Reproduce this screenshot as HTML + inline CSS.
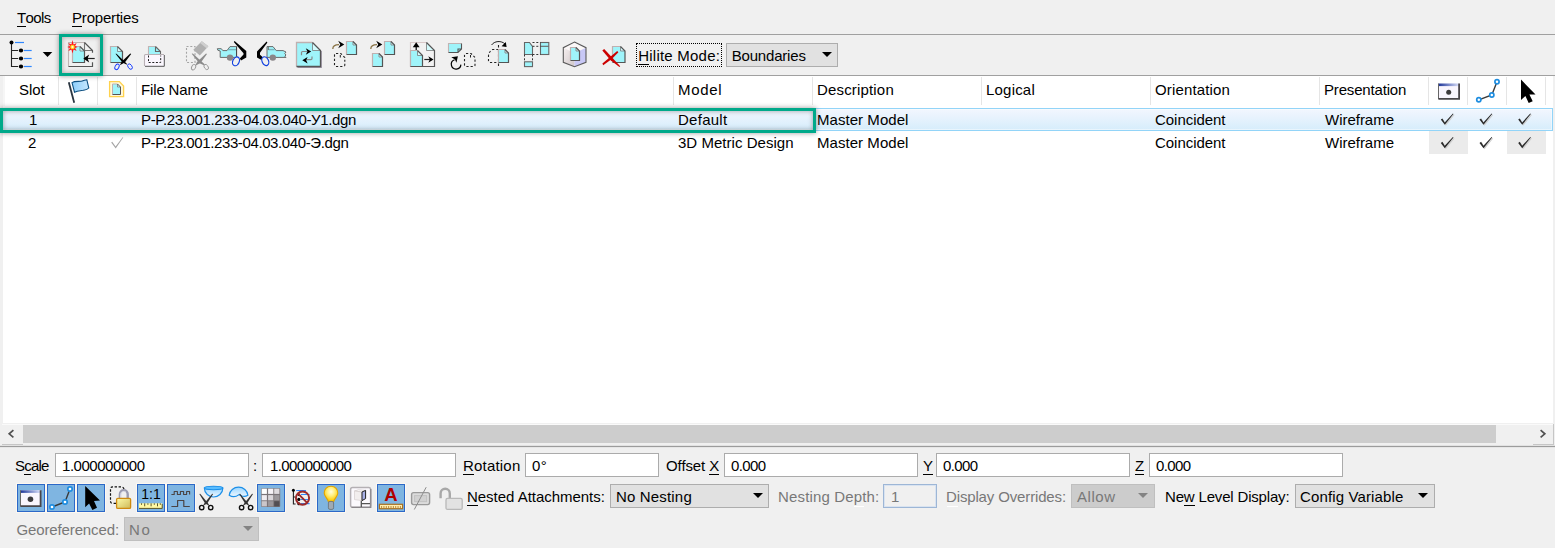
<!DOCTYPE html>
<html><head><meta charset="utf-8">
<style>
html,body{margin:0;padding:0;}
body{width:1555px;height:548px;background:#f0f0f0;position:relative;overflow:hidden;font-family:"Liberation Sans",sans-serif;font-size:15px;color:#000;}
.a{position:absolute;}
.t{position:absolute;white-space:nowrap;line-height:20px;height:20px;transform-origin:0 50%;}
.g{color:#787878;}
u{text-decoration:none;border-bottom:1px solid currentColor;display:inline-block;line-height:16px;}
.inp{position:absolute;box-sizing:border-box;background:#fff;border:1px solid #ababab;height:24px;top:453px;}
.cmb{position:absolute;box-sizing:border-box;background:#e1e1e1;border:1px solid #adadad;height:24px;}
.cmb.d{background:#cccccc;border-color:#bfbfbf;}
.arr{position:absolute;width:0;height:0;border-left:5px solid transparent;border-right:5px solid transparent;border-top:5px solid #000;}
.arr.d{border-top-color:#838383;}
.sep{position:absolute;top:77px;width:1px;height:28px;background:#e5e5e5;}
.tb{position:absolute;box-sizing:border-box;width:28px;height:28px;top:484px;}
.tb.on{background:#7fb5e1;border:1px solid #2c68c8;box-shadow:0 0 0 1px rgba(255,249,240,.85);}
svg{position:absolute;overflow:visible;}
/*FIT*/#m1{margin-left:0.00px;letter-spacing:-0.640px}#m2{margin-left:0.00px;letter-spacing:-0.190px}#h1{margin-left:0.00px;letter-spacing:-0.090px}#h2{margin-left:0.00px;letter-spacing:-0.148px}#h3{margin-left:0.00px;letter-spacing:0.655px}#h4{margin-left:0.00px;letter-spacing:0.170px}#h5{margin-left:0.00px;letter-spacing:0.203px}#h6{margin-left:0.00px;letter-spacing:0.150px}#h7{margin-left:0.00px;letter-spacing:-0.168px}#r1b{margin-left:0.00px;letter-spacing:-0.360px}#r1c{margin-left:0.00px;letter-spacing:0.267px}#r1d{margin-left:0.00px;letter-spacing:0.052px}#r1e{margin-left:0.00px;letter-spacing:-0.040px}#r1f{margin-left:1.00px;letter-spacing:-0.020px}#r2b{margin-left:0.00px;letter-spacing:-0.389px}#r2c{margin-left:0.00px;letter-spacing:0.030px}#r2d{margin-left:0.00px;letter-spacing:0.052px}#r2e{margin-left:0.00px;letter-spacing:-0.040px}#r2f{margin-left:1.00px;letter-spacing:-0.020px}#hm{margin-left:-0.80px;letter-spacing:0.225px}#hmc{margin-left:-0.32px;letter-spacing:-0.183px}#s1{margin-left:0.00px;letter-spacing:-0.810px}#s2{margin-left:-1.00px;letter-spacing:-0.460px}#s4{margin-left:0.00px;letter-spacing:-0.580px}#s5{margin-left:0.00px;letter-spacing:0.195px}#s6{margin-left:0.00px;letter-spacing:0.480px}#s7{margin-left:0.00px;letter-spacing:-0.090px}#s8{margin-left:0.00px;letter-spacing:-0.610px}#s10{margin-left:0.00px;letter-spacing:-0.610px}#s12{margin-left:0.00px;letter-spacing:-0.610px}#n1{margin-left:0.00px;letter-spacing:-0.030px}#n2{margin-left:0.00px;letter-spacing:0.169px}#n3{margin-left:-1.00px;letter-spacing:0.158px}#n5{margin-left:0.00px;letter-spacing:-0.144px}#n6{margin-left:0.00px;letter-spacing:0.555px}#n7{margin-left:-1.00px;letter-spacing:-0.174px}#n8{margin-left:-1.00px;letter-spacing:0.127px}#g1{margin-left:-0.60px;letter-spacing:-0.119px}#g2{margin-left:-1.00px;letter-spacing:1.710px}#r1a{margin-left:1.00px;letter-spacing:0.000px}#r2a{margin-left:0.00px;letter-spacing:0.000px}/*ENDFIT*/</style></head><body>

<!-- menu -->
<div class="t" id="m1" style="left:17px;top:8px;"><u>T</u>ools</div>
<div class="t" id="m2" style="left:72px;top:8px;"><u>P</u>roperties</div>

<!-- toolbar lines -->
<div class="a" style="left:0;top:34px;width:1555px;height:1px;background:#a0a0a0;"></div>
<div class="a" style="left:0;top:75px;width:1555px;height:1px;background:#a0a0a0;"></div>

<!-- table -->
<div class="a" id="table" style="left:3px;top:76px;width:1550px;height:347px;background:#fff;"></div>
<div class="a" style="left:3px;top:76px;width:2px;height:30px;background:#f6f6f6;"></div>

<!-- header separators -->
<div class="sep" style="left:58px"></div>
<div class="sep" style="left:97px"></div>
<div class="sep" style="left:136px"></div>
<div class="sep" style="left:673px"></div>
<div class="sep" style="left:812px"></div>
<div class="sep" style="left:981px"></div>
<div class="sep" style="left:1150px"></div>
<div class="sep" style="left:1319px"></div>
<div class="sep" style="left:1428px"></div>
<div class="sep" style="left:1467px"></div>
<div class="sep" style="left:1506px"></div>
<div class="sep" style="left:1545px"></div>

<!-- header text -->
<div class="t" id="h1" style="left:19px;top:80px;">Slot</div>
<div class="t" id="h2" style="left:141px;top:80px;">File Name</div>
<div class="t" id="h3" style="left:678px;top:80px;">Model</div>
<div class="t" id="h4" style="left:817px;top:80px;">Description</div>
<div class="t" id="h5" style="left:986px;top:80px;">Logical</div>
<div class="t" id="h6" style="left:1155px;top:80px;">Orientation</div>
<div class="t" id="h7" style="left:1324px;top:80px;">Presentation</div>

<!-- row 1 selected -->
<div class="a" style="left:0;top:108px;width:1553px;height:23px;box-sizing:border-box;border:1px solid #92d4f8;background:linear-gradient(#f2f6fe,#e6f2fd 45%,#d6edfb);box-shadow:inset 0 0 0 1px rgba(255,255,255,.45);"></div>
<!-- row 2 gray cells -->
<div class="a" style="left:1429px;top:131px;width:39px;height:23px;background:#ebebeb;"></div>
<div class="a" style="left:1507px;top:131px;width:39px;height:23px;background:#ebebeb;"></div>

<div class="t" id="r1a" style="left:28px;top:110px;">1</div>
<div class="t" id="r1b" style="left:141px;top:110px;">P-P.23.001.233-04.03.040-У1.dgn</div>
<div class="t" id="r1c" style="left:678px;top:110px;">Default</div>
<div class="t" id="r1d" style="left:817px;top:110px;">Master Model</div>
<div class="t" id="r1e" style="left:1155px;top:110px;">Coincident</div>
<div class="t" id="r1f" style="left:1324px;top:110px;">Wireframe</div>

<div class="t" id="r2a" style="left:28px;top:133px;">2</div>
<div class="t" id="r2b" style="left:141px;top:133px;">P-P.23.001.233-04.03.040-Э.dgn</div>
<div class="t" id="r2c" style="left:678px;top:133px;">3D Metric Design</div>
<div class="t" id="r2d" style="left:817px;top:133px;">Master Model</div>
<div class="t" id="r2e" style="left:1155px;top:133px;">Coincident</div>
<div class="t" id="r2f" style="left:1324px;top:133px;">Wireframe</div>

<!-- green highlight boxes -->
<div class="a" style="left:59px;top:34px;width:44px;height:42px;box-sizing:border-box;border:3px solid #00a98a;box-shadow:0 0 5px rgba(0,0,0,.4), inset 0 0 5px rgba(60,20,20,.35);"></div>
<div class="a" style="left:0px;top:108px;width:816px;height:25px;box-sizing:border-box;border:3px solid #00a98a;box-shadow:0 0 5px rgba(0,0,0,.4), inset 0 0 5px rgba(0,0,0,.35);"></div>

<!-- Hilite mode -->
<div class="a" style="left:636px;top:43px;width:86px;height:24px;box-sizing:border-box;border:1px dotted #000;"></div>
<div class="t" id="hm" style="left:639px;top:46px;"><u>H</u>ilite Mode:</div>
<div class="cmb" style="left:726px;top:43px;width:112px;"></div>
<div class="t" id="hmc" style="left:732px;top:46px;">Boundaries</div>
<div class="arr" style="left:822px;top:52px;"></div>

<!-- scrollbar -->
<div class="a" style="left:0;top:423px;width:1555px;height:23px;background:#f0f0f0;"></div>
<div class="a" style="left:2px;top:424px;width:1551px;height:1px;background:#fafafa;"></div>
<div class="a" style="left:23px;top:425px;width:1473px;height:18px;background:#cdcdcd;"></div>
<div class="a" style="left:2px;top:444px;width:21px;height:1px;background:#c6c6c6;"></div>
<div class="a" style="left:1533px;top:444px;width:21px;height:1px;background:#c6c6c6;"></div>
<div class="a" style="left:1553px;top:424px;width:1px;height:21px;background:#c6c6c6;"></div>
<div class="a" style="left:0;top:445px;width:1555px;height:1px;background:#e2e2e2;"></div>
<div class="a" style="left:0;top:446px;width:1555px;height:1px;background:#9c9c9c;"></div>
<div class="a" style="left:0;top:447px;width:1555px;height:1px;background:#e6e6e6;"></div>

<!-- Scale row -->
<div class="t" id="s1" style="left:15px;top:456px;">S<u>c</u>ale</div>
<div class="inp" style="left:55px;width:194px;"></div>
<div class="t" id="s2" style="left:63px;top:456px;">1.000000000</div>
<div class="t" id="s3" style="left:253px;top:456px;">:</div>
<div class="inp" style="left:262px;width:194px;"></div>
<div class="t" id="s4" style="left:270px;top:456px;">1.000000000</div>
<div class="t" id="s5" style="left:463px;top:456px;"><u>R</u>otation</div>
<div class="inp" style="left:525px;width:134px;"></div>
<div class="t" id="s6" style="left:532px;top:456px;">0°</div>
<div class="t" id="s7" style="left:666px;top:456px;">Offset <u>X</u></div>
<div class="inp" style="left:724px;width:194px;"></div>
<div class="t" id="s8" style="left:731px;top:456px;">0.000</div>
<div class="t" id="s9" style="left:923px;top:456px;"><u>Y</u></div>
<div class="inp" style="left:936px;width:194px;"></div>
<div class="t" id="s10" style="left:943px;top:456px;">0.000</div>
<div class="t" id="s11" style="left:1135px;top:456px;"><u>Z</u></div>
<div class="inp" style="left:1149px;width:194px;"></div>
<div class="t" id="s12" style="left:1156px;top:456px;">0.000</div>

<!-- icon row -->
<div class="tb on" style="left:17px"></div>
<div class="tb on" style="left:47px"></div>
<div class="tb on" style="left:77px"></div>
<div class="tb" style="left:107px"></div>
<div class="tb on" style="left:137px"></div>
<div class="tb on" style="left:167px"></div>
<div class="tb" style="left:197px"></div>
<div class="tb" style="left:227px"></div>
<div class="tb on" style="left:257px"></div>
<div class="tb" style="left:287px"></div>
<div class="tb on" style="left:317px"></div>
<div class="tb" style="left:347px"></div>
<div class="tb on" style="left:377px"></div>
<div class="tb" style="left:407px"></div>
<div class="tb" style="left:437px"></div>

<div class="t" id="n1" style="left:467px;top:487px;"><u>N</u>ested Attachments:</div>
<div class="cmb" style="left:610px;top:484px;width:159px;"></div>
<div class="t" id="n2" style="left:616px;top:487px;">No Nesting</div>
<div class="arr" style="left:753px;top:493px;"></div>
<div class="t g" id="n3" style="left:779px;top:487px;">Nesting Depth:</div>
<div class="a" style="left:883px;top:484px;width:54px;height:24px;box-sizing:border-box;border:1px solid #9db6d6;box-shadow:inset 0 0 0 1px #d9e3f0;background:#f0f0f0;"></div>
<div class="t g" id="n4" style="left:891px;top:487px;">1</div>
<div class="t g" id="n5" style="left:946px;top:487px;">Display Overrides:</div>
<div class="cmb d" style="left:1071px;top:484px;width:84px;"></div>
<div class="t g" id="n6" style="left:1077px;top:487px;">Allow</div>
<div class="arr d" style="left:1138px;top:493px;"></div>
<div class="t" id="n7" style="left:1166px;top:487px;">Ne<u>w</u> Level Display:</div>
<div class="cmb" style="left:1295px;top:484px;width:140px;"></div>
<div class="t" id="n8" style="left:1301px;top:487px;">Config Variable</div>
<div class="arr" style="left:1418px;top:493px;"></div>

<div class="a" style="left:854px;top:506px;width:10px;height:1px;background:#fff;"></div>
<div class="a" style="left:947px;top:506px;width:11px;height:1px;background:#fff;"></div>
<div class="a" style="left:18px;top:539px;width:11px;height:1px;background:#fff;"></div>
<!-- georef -->
<div class="t g" id="g1" style="left:17px;top:520px;">Georeferenced:</div>
<div class="cmb d" style="left:124px;top:517px;width:135px;"></div>
<div class="t g" id="g2" style="left:130px;top:520px;">No</div>
<div class="arr d" style="left:243px;top:526px;"></div>

<!--SVG--><svg width="1555" height="548" viewBox="0 0 1555 548" style="left:0;top:0;pointer-events:none">
<g>
<path d="M11.5,42.5V66.5H18M11.5,50.5H18M11.5,58.5H18" fill="none" stroke="#222" stroke-width="1.1"/>
<circle cx="11.5" cy="42.5" r="2" fill="#000"/>
<ellipse cx="21" cy="50.5" rx="2.2" ry="1.9" fill="#000"/>
<path d="M24,50.5H31.7" stroke="#3088ff" stroke-width="1.2"/>
<ellipse cx="21" cy="58.5" rx="2.2" ry="1.9" fill="#000"/>
<path d="M24,58.5H31.7" stroke="#3088ff" stroke-width="1.2"/>
<ellipse cx="21" cy="66.5" rx="2.2" ry="1.9" fill="#000"/>
<path d="M24,66.5H31.7" stroke="#3088ff" stroke-width="1.2"/>
<path d="M15,42.5H24" stroke="#3088ff" stroke-width="1.2"/>
<path d="M42.7,52H52.3L47.5,57Z" fill="#000"/>
</g>
<path d="M68.5,66.5V42.5H84.5" fill="none" stroke="#c0b4b4" stroke-width="1.1"/>
<path d="M84.5,42.5V50.5H92.5" fill="none" stroke="#777" stroke-width="1.1"/>
<path d="M84.5,42.5L92.5,50.5V52.8M92.5,62.3V66.5H68.5" fill="none" stroke="#555" stroke-width="1.2"/>
<path d="M72.5,46.5H80.0L84.5,51.0V62.5H72.5Z" fill="#9ff4fa" stroke="none"/>
<path d="M72.5,62.5V46.5H80.0" fill="none" stroke="#bfb0b0" stroke-width="1.2"/>
<path d="M80.0,46.5V51.0H84.5Z" fill="#d4fbfd" stroke="none"/>
<path d="M80.0,46.5V51.0H84.5" fill="none" stroke="#7a7a7a" stroke-width="0.8"/>
<path d="M80.0,46.5L84.5,51.0V62.5H72.5" fill="none" stroke="#555" stroke-width="1.2"/>
<path d="M94.7,58.5H86.5" stroke="#222" stroke-width="1.2"/>
<path d="M83.3,58.5L89.2,54.6L87.6,58.5L89.2,62.4Z" fill="#000"/>
<path d="M72.5,40L73.6,44.4L76.6,42.9L75.1,45.9L77.6,47L75.1,48.1L76.6,51.1L73.6,49.6L72.5,53.6L71.4,49.6L68.4,51.1L69.9,48.1L67.2,47L69.9,45.9L68.4,42.9L71.4,44.4Z" fill="#ff1418"/>
<circle cx="72.5" cy="47" r="2.3" fill="#ffd820"/><circle cx="72.5" cy="47" r="1.1" fill="#fffbe0"/>
<path d="M110.5,46.5H117.5L122.5,51.5V62.5H110.5Z" fill="#9ff4fa" stroke="none"/>
<path d="M110.5,62.5V46.5H117.5" fill="none" stroke="#bfb0b0" stroke-width="1.2"/>
<path d="M117.5,46.5V51.5H122.5Z" fill="#d4fbfd" stroke="none"/>
<path d="M117.5,46.5V51.5H122.5" fill="none" stroke="#7a7a7a" stroke-width="0.8"/>
<path d="M117.5,46.5L122.5,51.5V62.5H110.5" fill="none" stroke="#555" stroke-width="1.2"/>
<path d="M115.5,53.8L116.5,53.7L126.6,63.4L127,64.8L122.4,62.6Z" fill="#000"/>
<path d="M131.2,54L130.3,53.6L121.8,61.4L119.8,65.3L124.8,62.4Z" fill="#000"/>
<ellipse cx="117" cy="66.8" rx="1.9" ry="3" transform="rotate(28 117 66.8)" fill="none" stroke="#1238ff" stroke-width="0.9"/>
<ellipse cx="130" cy="66.6" rx="1.9" ry="3" transform="rotate(-35 130 66.6)" fill="none" stroke="#1238ff" stroke-width="0.9"/>
<path d="M148.5,55V46.5H155.5L160.5,51.5V55Z" fill="#9ff4fa"/>
<path d="M148.5,55V46.5H155.5" fill="none" stroke="#c0b4b4" stroke-width="1.1"/>
<path d="M155.5,46.5V51.5H160.5M155.5,46.5L160.5,51.5V55" fill="none" stroke="#666" stroke-width="1.1"/>
<rect x="144.5" y="54.5" width="20" height="12" rx="1" fill="#fbf7fe"/>
<path d="M144.5,66V55.5Q144.5,54.5 145.5,54.5H164" fill="none" stroke="#b8b0b4" stroke-width="1.1"/>
<path d="M164.3,55V66.3H145" fill="none" stroke="#555" stroke-width="1"/>
<path d="M148.5,55.5V62.5H160.7V55.5" fill="none" stroke="#222" stroke-width="1" stroke-dasharray="2 1.6"/>
<rect x="186.5" y="46.5" width="8.5" height="16" fill="none" stroke="#a4a4a4" stroke-width="1.1" stroke-dasharray="2 1.8"/>
<path d="M193.3,49.8L201.8,41.3L208.4,46.2L199.8,55.4Z" fill="#b0b0b0"/>
<path d="M201.8,41.3L208.4,46.2L206.5,48.2L200,43.1Z" fill="#cfcfcf"/>
<path d="M191.7,53.8L192.8,53.6L204.6,64.2L204.5,65.4L199,63Z" fill="#8c8c8c"/>
<path d="M207,54L206,53.6L197,62L195.2,65.8L200.5,63Z" fill="#8c8c8c"/>
<ellipse cx="193.6" cy="67.2" rx="1.9" ry="2.9" transform="rotate(28 193.6 67.2)" fill="none" stroke="#9a9a9a" stroke-width="0.9"/>
<ellipse cx="206.2" cy="67" rx="1.9" ry="2.9" transform="rotate(-35 206.2 67)" fill="none" stroke="#9a9a9a" stroke-width="0.9"/>
<path d="M217.3,48.7H221.3L222.8,50.6H227L230,46.6H236.5V57.4H220.2V51L217.8,50.2Z" fill="#9ff4fa" stroke="#6a6a6a" stroke-width="1"/>
<path d="M228,49.6H236" stroke="#7ab4bc" stroke-width="1.4"/>
<circle cx="230" cy="57.6" r="3.2" fill="#8a8688"/>
<path d="M236.6,46.5V57.5" stroke="#444" stroke-width="1"/>
<path d="M233.8,42L234.6,40.9L246.3,51V57.6L241,60.6L239.8,58.4L243.5,54.6V53.2Z" fill="#000"/>
<ellipse cx="236" cy="61.3" rx="3.2" ry="4.6" transform="rotate(25 236 61.3)" fill="#f0f0f0" stroke="#1040e0" stroke-width="1.2"/>
<path d="M267,46.6H273L276.2,50.6H283L286,52L284.8,53.6L286,55L284.8,56.2L286,57.4H267Z" fill="#9ff4fa" stroke="#6a6a6a" stroke-width="1"/>
<path d="M268.6,49.6H274.5" stroke="#7ab4bc" stroke-width="1.4"/>
<path d="M268.3,46.6V50" stroke="#6a6a6a" stroke-width="1"/>
<circle cx="272.8" cy="57.6" r="3.2" fill="#8a8688"/>
<path d="M266.6,41.4L267.4,42.4L260,52.8V54.8L263.6,58L262,60.2L257,57.6V51.4Z" fill="#000"/>
<ellipse cx="265.3" cy="61.2" rx="3.2" ry="4.6" transform="rotate(-25 265.3 61.2)" fill="#f0f0f0" stroke="#1040e0" stroke-width="1.2"/>
<path d="M297.5,67.3H321.3V51" fill="none" stroke="#a098a8" stroke-width="1.2"/>
<path d="M296.5,42.5H312.5L320.5,50.5V66.5H296.5Z" fill="#9ff4fa" stroke="none"/>
<path d="M296.5,66.5V42.5H312.5" fill="none" stroke="#bfb0b0" stroke-width="1.3"/>
<path d="M312.5,42.5V50.5H320.5Z" fill="#d4fbfd" stroke="none"/>
<path d="M312.5,42.5V50.5H320.5" fill="none" stroke="#7a7a7a" stroke-width="0.8"/>
<path d="M312.5,42.5L320.5,50.5V66.5H296.5" fill="none" stroke="#555" stroke-width="1.3"/>
<path d="M301.5,55.2V52.5Q301.5,51.5 302.5,51.5H307" fill="none" stroke="#8a8a8a" stroke-width="1.2"/>
<path d="M311.2,51.5L305.8,48.3L307.4,51.5L305.8,54.7Z" fill="#000"/>
<path d="M312,56.5V58.6Q312,59.6 311,59.6H306.5" fill="none" stroke="#8a8a8a" stroke-width="1.2"/>
<path d="M302.3,60.2L307.6,57L306.2,60.2L307.6,63.4Z" fill="#000"/>
<path d="M332.8,49Q332.8,44.6 339,44.6" fill="none" stroke="#8a7448" stroke-width="1.3"/>
<path d="M344.3,44.5L338.2,40.8L340.2,44.5L338.2,48.2Z" fill="#000"/>
<path d="M370.8,49Q370.8,44.6 377,44.6" fill="none" stroke="#8a7448" stroke-width="1.3"/>
<path d="M382.3,44.5L376.2,40.8L378.2,44.5L376.2,48.2Z" fill="#000"/>
<path d="M346.5,41.5H353.0L356.5,45.0V54.5H346.5Z" fill="#9ff4fa" stroke="none"/>
<path d="M346.5,54.5V41.5H353.0" fill="none" stroke="#bfb0b0" stroke-width="1.2"/>
<path d="M353.0,41.5V45.0H356.5Z" fill="#d4fbfd" stroke="none"/>
<path d="M353.0,41.5V45.0H356.5" fill="none" stroke="#7a7a7a" stroke-width="0.8"/>
<path d="M353.0,41.5L356.5,45.0V54.5H346.5" fill="none" stroke="#555" stroke-width="1.2"/>
<path d="M336.0,53.5H340.8L344.8,57.5V65.0Q344.8,66.5 343.3,66.5H336.0Q334.5,66.5 334.5,65.0V55.0Q334.5,53.5 336.0,53.5Z" fill="none" stroke="#222" stroke-width="1.1" stroke-dasharray="2.2 2"/>
<path d="M340.3,55.0V57.5" fill="none" stroke="#222" stroke-width="1"/>
<path d="M384.5,41.5H391.0L394.5,45.0V54.5H384.5Z" fill="#9ff4fa" stroke="none"/>
<path d="M384.5,54.5V41.5H391.0" fill="none" stroke="#bfb0b0" stroke-width="1.2"/>
<path d="M391.0,41.5V45.0H394.5Z" fill="#d4fbfd" stroke="none"/>
<path d="M391.0,41.5V45.0H394.5" fill="none" stroke="#7a7a7a" stroke-width="0.8"/>
<path d="M391.0,41.5L394.5,45.0V54.5H384.5" fill="none" stroke="#555" stroke-width="1.2"/>
<path d="M372.5,53.5H379.0L382.5,57.0V66.5H372.5Z" fill="#9ff4fa" stroke="none"/>
<path d="M372.5,66.5V53.5H379.0" fill="none" stroke="#bfb0b0" stroke-width="1.2"/>
<path d="M379.0,53.5V57.0H382.5Z" fill="#d4fbfd" stroke="none"/>
<path d="M379.0,53.5V57.0H382.5" fill="none" stroke="#7a7a7a" stroke-width="0.8"/>
<path d="M379.0,53.5L382.5,57.0V66.5H372.5" fill="none" stroke="#555" stroke-width="1.2"/>
<path d="M410.5,42.5H426.5L434.5,50.5V66.5H410.5Z" fill="#f2f2f2" stroke="none"/>
<path d="M410.5,66.5V42.5H426.5" fill="none" stroke="#d8c8c8" stroke-width="1.2"/>
<path d="M426.5,42.5V50.5H434.5Z" fill="#d4fbfd" stroke="none"/>
<path d="M426.5,42.5V50.5H434.5" fill="none" stroke="#7a7a7a" stroke-width="0.8"/>
<path d="M426.5,42.5L434.5,50.5V66.5H410.5" fill="none" stroke="#555" stroke-width="1.2"/>
<path d="M410.5,50.5H417.5L422.5,55.5V66.5H410.5Z" fill="#9ff4fa" stroke="none"/>
<path d="M410.5,66.5V50.5H417.5" fill="none" stroke="#bfb0b0" stroke-width="1.2"/>
<path d="M417.5,50.5V55.5H422.5Z" fill="#d4fbfd" stroke="none"/>
<path d="M417.5,50.5V55.5H422.5" fill="none" stroke="#7a7a7a" stroke-width="0.8"/>
<path d="M417.5,50.5L422.5,55.5V66.5H410.5" fill="none" stroke="#555" stroke-width="1.2"/>
<path d="M416.2,42.3L412.8,47.2H419.6Z" fill="#000"/><path d="M416.2,47V50" stroke="#000" stroke-width="1.2"/>
<path d="M424.3,59.5H430" stroke="#222" stroke-width="1.2"/><path d="M433.5,59.5L428.3,56.3L429.8,59.5L428.3,62.7Z" fill="#000"/>
<path d="M448.5,43.5H461.5V49L458,52.5H448.5Z" fill="#9ff4fa"/>
<path d="M448.5,52.5V43.5H461.5" fill="none" stroke="#c0b4b4" stroke-width="1.1"/>
<path d="M461.5,43.5V49L458,52.5H448.5M458,52.5V49H461.5" fill="none" stroke="#555" stroke-width="1.1"/>
<path d="M460.9,64.6A4.8,4.8 0 1 1 454.6,59.7" fill="none" stroke="#000" stroke-width="1.2"/>
<path d="M451.3,57.3L457.9,56.2L456.4,62.8L455,59.4Z" fill="#000"/>
<path d="M466.0,53.5H471L475,57.5V65.0Q475,66.5 473.5,66.5H466.0Q464.5,66.5 464.5,65.0V55.0Q464.5,53.5 466.0,53.5Z" fill="none" stroke="#222" stroke-width="1.1" stroke-dasharray="2.2 2"/>
<path d="M470.5,55.0V57.5" fill="none" stroke="#222" stroke-width="1"/>
<path d="M491.6,45A8,6.4 0 0 1 505,44" fill="none" stroke="#222" stroke-width="1"/>
<path d="M506.6,47L501.6,46.2L505.8,42Z" fill="#000"/>
<path d="M498.5,45V67.5" stroke="#222" stroke-width="1.1" stroke-dasharray="2.6 2"/>
<path d="M498.5,49.5H492.5Q488.5,52 488.5,56V61Q488.5,62.5 490,62.5H498.5" fill="none" stroke="#222" stroke-width="1.1" stroke-dasharray="2.2 2"/>
<path d="M498.5,49.5H505.0L508.5,53.0V62.5H498.5Z" fill="#9ff4fa" stroke="none"/>
<path d="M498.5,62.5V49.5H505.0" fill="none" stroke="#bfb0b0" stroke-width="1.2"/>
<path d="M505.0,49.5V53.0H508.5Z" fill="#d4fbfd" stroke="none"/>
<path d="M505.0,49.5V53.0H508.5" fill="none" stroke="#7a7a7a" stroke-width="0.8"/>
<path d="M505.0,49.5L508.5,53.0V62.5H498.5" fill="none" stroke="#555" stroke-width="1.2"/>
<path d="M524.5,42.5H529.5L532.5,46.5V54.5H524.5Z" fill="#9ff4fa" stroke="#666" stroke-width="1.1"/>
<rect x="540.5" y="42.5" width="8.3" height="12" fill="#9ff4fa" stroke="#666" stroke-width="1.1"/>
<path d="M540.5,46.3H548.8" stroke="#666" stroke-width="1.1"/>
<rect x="524.5" y="61.8" width="8" height="4.8" fill="#9ff4fa" stroke="#666" stroke-width="1.1"/>
<path d="M532.5,42.5H540.5M532.5,46.3H540.5M532.5,54.5H540.5M524.5,54.5V61.8M532.5,54.5V61.8" fill="none" stroke="#333" stroke-width="1" stroke-dasharray="2 1.8"/>
<defs><linearGradient id="cl" x1="0" y1="0" x2="1" y2="1"><stop offset="0" stop-color="#f6f0f0"/><stop offset="1" stop-color="#cfc6c8"/></linearGradient></defs>
<path d="M574.5,42L586,47.7L574.5,53.3L563.3,47.7Z" fill="#fbf8f8"/>
<path d="M563.3,47.7L574.5,53.3V66.7L563.3,62.3Z" fill="url(#cl)"/>
<path d="M574.5,53.3L586,47.7V62.3L574.5,66.7Z" fill="#c8c8f6"/>
<path d="M574.5,42L586,47.7V62.3L574.5,66.7L563.3,62.3V47.7Z" fill="none" stroke="#5a5a5a" stroke-width="1.1"/>
<path d="M570.5,47.5H576.0L579.5,51.0V60.5H570.5Z" fill="#9ff4fa" stroke="none"/>
<path d="M570.5,60.5V47.5H576.0" fill="none" stroke="#bfb0b0" stroke-width="1.2"/>
<path d="M576.0,47.5V51.0H579.5Z" fill="#d4fbfd" stroke="none"/>
<path d="M576.0,47.5V51.0H579.5" fill="none" stroke="#7a7a7a" stroke-width="0.8"/>
<path d="M576.0,47.5L579.5,51.0V60.5H570.5" fill="none" stroke="#555" stroke-width="1.2"/>
<path d="M612.5,46.5H620.5L625,51.0V62.5H612.5Z" fill="#9ff4fa" stroke="none"/>
<path d="M612.5,62.5V46.5H620.5" fill="none" stroke="#bfb0b0" stroke-width="1.2"/>
<path d="M620.5,46.5V51.0H625Z" fill="#d4fbfd" stroke="none"/>
<path d="M620.5,46.5V51.0H625" fill="none" stroke="#7a7a7a" stroke-width="0.8"/>
<path d="M620.5,46.5L625,51.0V62.5H612.5" fill="none" stroke="#555" stroke-width="1.2"/>
<path d="M602.3,50.6L604.2,49L620.2,66.2L619.4,67L610.6,60.2Z" fill="#cc0000"/>
<path d="M617.2,51L618.4,52.2L611.8,59L603.2,65.2L602.4,63.6Z" fill="#cc0000"/>
<defs><linearGradient id="fg" x1="0" y1="0" x2="1" y2="0"><stop offset="0" stop-color="#8ccefb"/><stop offset="1" stop-color="#c6e7fd"/></linearGradient></defs>
<path d="M68.8,82.3L74.2,102.8" stroke="#2a3540" stroke-width="1.8"/>
<path d="M72,82.6C75,80.6 80,82 83,80.8C85,80.1 86,79.5 86.8,79.7L88.8,88C87,90 85,90 83,90.3C80,90.6 77,90.6 74.5,92.2Z" fill="url(#fg)" stroke="#0d4f80" stroke-width="1.1"/>
<path d="M109.6,81.6H119.4L123.6,86V96.6H109.6Z" fill="#fff8dc" stroke="#ffd24d" stroke-width="1.3"/>
<path d="M112.5,84H117.5L120.5,87V94.5H112.5Z" fill="#9ff4fa" stroke="none"/>
<path d="M112.5,94.5V84H117.5" fill="none" stroke="#bfb0b0" stroke-width="1"/>
<path d="M117.5,84V87H120.5Z" fill="#d4fbfd" stroke="none"/>
<path d="M117.5,84V87H120.5" fill="none" stroke="#7a7a7a" stroke-width="0.8"/>
<path d="M117.5,84L120.5,87V94.5H112.5" fill="none" stroke="#555" stroke-width="1"/>
<defs><linearGradient id="d1" x1="0" y1="0" x2="1" y2="0"><stop offset="0" stop-color="#1c3498"/><stop offset="1" stop-color="#dde2fb"/></linearGradient></defs>
<rect x="1438.5" y="83.5" width="21.0" height="15.700000000000003" fill="#f9f5fd"/>
<rect x="1438.5" y="83.5" width="21.0" height="2.6" fill="url(#d1)"/>
<path d="M1438.5,99.2V83.5" fill="none" stroke="#666" stroke-width="1"/>
<path d="M1459.1,83.5V98.8H1438.5" fill="none" stroke="#4a464a" stroke-width="1.8"/>
<circle cx="1448.7" cy="92.14999999999999" r="2.5" fill="#3c3a3c"/>
<defs><linearGradient id="d2" x1="0" y1="0" x2="1" y2="0"><stop offset="0" stop-color="#1c3498"/><stop offset="1" stop-color="#dde2fb"/></linearGradient></defs>
<rect x="20.5" y="490.3" width="20.5" height="16.30000000000001" fill="#f9f5fd"/>
<rect x="20.5" y="490.3" width="20.5" height="2.6" fill="url(#d2)"/>
<path d="M20.5,506.6V490.3" fill="none" stroke="#666" stroke-width="1"/>
<path d="M40.6,490.3V506.20000000000005H20.5" fill="none" stroke="#4a464a" stroke-width="1.8"/>
<circle cx="30.45" cy="499.25000000000006" r="2.8" fill="#3c3a3c"/>
<path d="M1478.8,99.8L1491.8,95L1497,81.8" fill="none" stroke="#3a3a3a" stroke-width="1.4"/>
<circle cx="1478.8" cy="99.8" r="2.1" fill="#fff" stroke="#1e8de0" stroke-width="1.7"/>
<circle cx="1491.8" cy="95" r="2.1" fill="#fff" stroke="#1e8de0" stroke-width="1.7"/>
<circle cx="1497" cy="81.8" r="2.1" fill="#fff" stroke="#1e8de0" stroke-width="1.7"/>
<path d="M52,507L65,502L70,489" fill="none" stroke="#3a3a3a" stroke-width="1.4"/>
<circle cx="52" cy="507" r="2.2" fill="#fff" stroke="#1e8de0" stroke-width="1.7"/>
<circle cx="65" cy="502" r="2.2" fill="#fff" stroke="#1e8de0" stroke-width="1.7"/>
<circle cx="70" cy="489" r="2.2" fill="#fff" stroke="#1e8de0" stroke-width="1.7"/>
<path d="M1521,79.6V99.9L1525.4,96L1528.7,103L1532.7,101.3L1529.4,94.6L1535.5,94.4Z" fill="#000"/>
<path d="M85.2,486V507.2L89.1,503.4L92.4,510L97,507.8L94,501L100,500.6Z" fill="#000"/>
<path d="M-6.2,-0.2L-4.6,-1.4L-2.3,2.6L5.9,-6.2L6.5,-5.7L-2.2,5Z" transform="translate(1448,120.8)" fill="#cfcfcf"/>
<path d="M-6.2,-0.2L-4.6,-1.4L-2.3,2.6L5.9,-6.2L6.5,-5.7L-2.2,5Z" transform="translate(1447,119.8)" fill="#2a2a2a"/>
<path d="M-6.2,-0.2L-4.6,-1.4L-2.3,2.6L5.9,-6.2L6.5,-5.7L-2.2,5Z" transform="translate(1448,144.2)" fill="#cfcfcf"/>
<path d="M-6.2,-0.2L-4.6,-1.4L-2.3,2.6L5.9,-6.2L6.5,-5.7L-2.2,5Z" transform="translate(1447,143.2)" fill="#2a2a2a"/>
<path d="M-6.2,-0.2L-4.6,-1.4L-2.3,2.6L5.9,-6.2L6.5,-5.7L-2.2,5Z" transform="translate(1486.7,120.8)" fill="#cfcfcf"/>
<path d="M-6.2,-0.2L-4.6,-1.4L-2.3,2.6L5.9,-6.2L6.5,-5.7L-2.2,5Z" transform="translate(1485.7,119.8)" fill="#2a2a2a"/>
<path d="M-6.2,-0.2L-4.6,-1.4L-2.3,2.6L5.9,-6.2L6.5,-5.7L-2.2,5Z" transform="translate(1486.7,144.2)" fill="#cfcfcf"/>
<path d="M-6.2,-0.2L-4.6,-1.4L-2.3,2.6L5.9,-6.2L6.5,-5.7L-2.2,5Z" transform="translate(1485.7,143.2)" fill="#2a2a2a"/>
<path d="M-6.2,-0.2L-4.6,-1.4L-2.3,2.6L5.9,-6.2L6.5,-5.7L-2.2,5Z" transform="translate(1525.4,120.8)" fill="#cfcfcf"/>
<path d="M-6.2,-0.2L-4.6,-1.4L-2.3,2.6L5.9,-6.2L6.5,-5.7L-2.2,5Z" transform="translate(1524.4,119.8)" fill="#2a2a2a"/>
<path d="M-6.2,-0.2L-4.6,-1.4L-2.3,2.6L5.9,-6.2L6.5,-5.7L-2.2,5Z" transform="translate(1525.4,144.2)" fill="#cfcfcf"/>
<path d="M-6.2,-0.2L-4.6,-1.4L-2.3,2.6L5.9,-6.2L6.5,-5.7L-2.2,5Z" transform="translate(1524.4,143.2)" fill="#2a2a2a"/>
<path d="M111.2,142.6L112.2,141.8L115.6,146.4L122.6,137.2L123.3,137.6L115.7,148.6Z" fill="#a4a4a4"/>
<path d="M13.4,430.2L9.2,433.8L13.4,437.4" fill="none" stroke="#505050" stroke-width="1.7"/>
<path d="M1540.6,430.2L1544.8,433.8L1540.6,437.4" fill="none" stroke="#505050" stroke-width="1.7"/>
<path d="M116,503.3H112.5Q110.5,503.3 110.5,501.3V489Q110.5,486.8 112.7,486.8H121Q123.6,486.8 124.2,489.6" fill="none" stroke="#111" stroke-width="1.2" stroke-dasharray="2.4 1.6"/>
<path d="M119.9,498.5V494.2A3.9,3.9 0 0 1 127.7,494.2V498.5" fill="none" stroke="#9c9cb0" stroke-width="2.4"/>
<path d="M120.6,498.5V494.2A3.2,3.2 0 0 1 126,492.2" fill="none" stroke="#e0e0ec" stroke-width="0.9"/>
<defs><linearGradient id="lk" x1="0" y1="0" x2="1" y2="1"><stop offset="0" stop-color="#fffca8"/><stop offset="1" stop-color="#cdb858"/></linearGradient></defs>
<rect x="116.6" y="498.4" width="14" height="10" rx="1.2" fill="url(#lk)" stroke="#cf8a10" stroke-width="1.3"/>
<text x="151" y="499.2" font-family="Liberation Sans, sans-serif" font-size="14" text-anchor="middle" fill="#000">1:1</text>
<rect x="139" y="503.3" width="23" height="5" fill="#fff9a4"/>
<path d="M139,508.4H162.2V504" fill="none" stroke="#5c5420" stroke-width="1"/>
<path d="M141.5,503.3V504.8" stroke="#4a4420" stroke-width="0.9"/>
<path d="M144.7,503.3V506.3" stroke="#4a4420" stroke-width="0.9"/>
<path d="M147.9,503.3V504.8" stroke="#4a4420" stroke-width="0.9"/>
<path d="M151.1,503.3V506.3" stroke="#4a4420" stroke-width="0.9"/>
<path d="M154.3,503.3V504.8" stroke="#4a4420" stroke-width="0.9"/>
<path d="M157.5,503.3V506.3" stroke="#4a4420" stroke-width="0.9"/>
<path d="M160.3,503.3V504.8" stroke="#4a4420" stroke-width="0.9"/>
<path d="M171.4,494.5H174.2V491.5H177.4V494.5H180.4V491.5H183.6V494.5H186.6V491.5H189.6V494.5" fill="none" stroke="#4a4444" stroke-width="1.1" stroke-linejoin="round"/>
<path d="M171.4,506.5H177.6V500.5H183.8V506.5H189.8" fill="none" stroke="#4a4444" stroke-width="1.2" stroke-linejoin="round"/>
<defs><linearGradient id="bw" x1="0" y1="0" x2="0" y2="1"><stop offset="0" stop-color="#9ad6ff"/><stop offset="1" stop-color="#f0f8ff"/></linearGradient></defs>
<path d="M204.4,488.2C204.4,493.4 209,497 213.6,497C218.2,497 222.8,493.4 222.8,488.2Z" fill="url(#bw)" stroke="#1c8fe8" stroke-width="1.2"/>
<ellipse cx="213.6" cy="488" rx="9.2" ry="1.7" fill="#58bcff" stroke="#1c8fe8" stroke-width="1.1"/>
<path d="M229.2,495.2A9.4,8.9 0 0 1 247.9,495.2Q245,497 242,496L239,494.6Q234,498.5 229.2,495.2Z" fill="url(#bw)" stroke="#1c8fe8" stroke-width="1.2"/>
<path d="M199.3,494L200.2,493.8L208.2,503.4L209.6,506L205.2,503.6Z" fill="#333"/>
<path d="M213.1,494L212.2,493.8L204.2,503.4L202.8,506L207.2,503.6Z" fill="#333"/>
<circle cx="201.7" cy="507.6" r="2.2" fill="none" stroke="#111" stroke-width="1.4"/>
<circle cx="210.7" cy="507.6" r="2.2" fill="none" stroke="#111" stroke-width="1.4"/>
<path d="M239.20000000000002,494L240.1,493.8L248.1,503.4L249.5,506L245.1,503.6Z" fill="#333"/>
<path d="M253.0,494L252.1,493.8L244.1,503.4L242.70000000000002,506L247.1,503.6Z" fill="#333"/>
<circle cx="241.6" cy="507.6" r="2.2" fill="none" stroke="#111" stroke-width="1.4"/>
<circle cx="250.6" cy="507.6" r="2.2" fill="none" stroke="#111" stroke-width="1.4"/>
<rect x="261.2" y="488.2" width="19" height="18.8" rx="0.8" fill="#7a7478"/>
<rect x="261.7" y="488.7" width="5.2" height="5.2" fill="#ffffff"/>
<rect x="268.1" y="488.7" width="5.2" height="5.2" fill="#f6f2f6"/>
<rect x="274.2" y="488.7" width="5.2" height="5.2" fill="#dedade"/>
<rect x="261.7" y="495.1" width="5.2" height="5.2" fill="#f0ecf0"/>
<rect x="268.1" y="495.1" width="5.2" height="5.2" fill="#dad6da"/>
<rect x="274.2" y="495.1" width="5.2" height="5.2" fill="#9c989c"/>
<rect x="261.7" y="501.2" width="5.2" height="5.2" fill="#cac6ca"/>
<rect x="268.1" y="501.2" width="5.2" height="5.2" fill="#9a969a"/>
<rect x="274.2" y="501.2" width="5.2" height="5.2" fill="#524e52"/>
<path d="M293.4,490V504H295.6M293.4,497H295.6" fill="none" stroke="#222" stroke-width="1.1"/>
<circle cx="293.4" cy="490.2" r="1.5" fill="#000"/>
<path d="M296.2,490.5H306M301,494.5H309.6M301,499.5H309.6M301,503.7H309.6" stroke="#3088ff" stroke-width="1.2"/>
<circle cx="298.6" cy="494.6" r="1.4" fill="#000"/><circle cx="298.8" cy="499.4" r="1.6" fill="#000"/><circle cx="298.8" cy="503.8" r="1.5" fill="#000"/>
<circle cx="302.5" cy="498.1" r="6.6" fill="none" stroke="#9c2a2a" stroke-width="1.9"/><path d="M297.8,493.4L307.2,502.8" stroke="#9c2a2a" stroke-width="1.9"/>
<defs><radialGradient id="bl" cx="0.5" cy="0.36" r="0.6"><stop offset="0" stop-color="#fffde0"/><stop offset="0.45" stop-color="#fff080"/><stop offset="1" stop-color="#ffc800"/></radialGradient></defs>
<path d="M331,486.2C326.5,486.2 324.2,489.6 324.2,493C324.2,496.6 327.6,498.4 328.3,501.5H333.7C334.4,498.4 337.8,496.6 337.8,493C337.8,489.6 335.5,486.2 331,486.2Z" fill="url(#bl)" stroke="#e2a400" stroke-width="1.1"/>
<rect x="328.4" y="501.4" width="5.2" height="8" rx="1.6" fill="#a0aab2" stroke="#707a82" stroke-width="1"/>
<rect x="350.6" y="487.6" width="20" height="19.6" rx="2" fill="#fbf9fd" stroke="#b4b0b4" stroke-width="1.5"/>
<path d="M351.5,507.4H370.8V489" fill="none" stroke="#8a868a" stroke-width="1.2"/>
<path d="M354.5,491L358.5,489.8L365.6,490.4L362,492Z" fill="#fff" stroke="#c8c0c0" stroke-width="0.6"/>
<path d="M354.5,491L362,492V500.6L354.5,499.6Z" fill="#f2eeee" stroke="#d0c8c8" stroke-width="0.6"/>
<path d="M362,492L365.6,490.4V498.6L362,500.6Z" fill="#a8b0e6" stroke="#222" stroke-width="1"/>
<path d="M361.3,500.8V507M361.3,503.7H370" fill="none" stroke="#555" stroke-width="1.3"/>
<text x="391" y="501" font-family="Liberation Sans, sans-serif" font-weight="bold" font-size="18.5" text-anchor="middle" fill="#b00000">A</text>
<rect x="379.4" y="504.3" width="23.2" height="4.4" fill="#ffeeb0" stroke="#a87020" stroke-width="1.2"/>
<path d="M381.6,506V508" stroke="#a87020" stroke-width="0.8"/>
<path d="M383.95000000000005,506V508" stroke="#a87020" stroke-width="0.8"/>
<path d="M386.3,506V508" stroke="#a87020" stroke-width="0.8"/>
<path d="M388.65000000000003,506V508" stroke="#a87020" stroke-width="0.8"/>
<path d="M391.0,506V508" stroke="#a87020" stroke-width="0.8"/>
<path d="M393.35,506V508" stroke="#a87020" stroke-width="0.8"/>
<path d="M395.70000000000005,506V508" stroke="#a87020" stroke-width="0.8"/>
<path d="M398.05,506V508" stroke="#a87020" stroke-width="0.8"/>
<path d="M400.40000000000003,506V508" stroke="#a87020" stroke-width="0.8"/>
<rect x="411.6" y="492.6" width="18" height="12" rx="2" fill="#dcdcdc" stroke="#9a9a9a" stroke-width="1.4"/>
<rect x="414.6" y="495.6" width="12" height="6" fill="#d2d2d2" stroke="#c2c2c2" stroke-width="1"/>
<path d="M426.2,487.2L414.3,509.5" stroke="#8c8c8c" stroke-width="1"/>
<path d="M440.6,498.3V493.4A4.6,4.6 0 0 1 449.8,493.4V498.2" fill="none" stroke="#a8a8a8" stroke-width="2.4"/>
<rect x="446" y="498.4" width="16.2" height="11" rx="1.5" fill="#e2e2e2" stroke="#b8b8b8" stroke-width="1.3"/>
</svg><!--/SVG-->

</body></html>
